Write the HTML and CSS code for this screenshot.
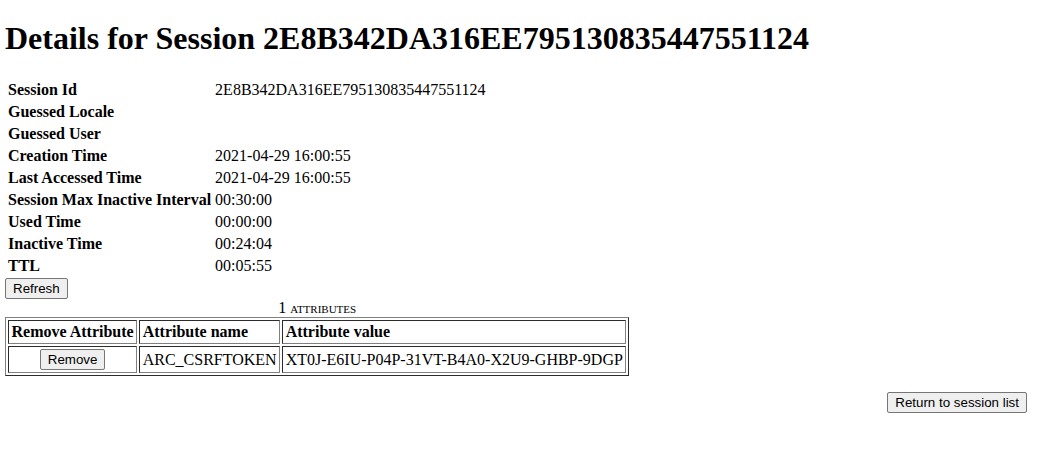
FILE: index.html
```html
<!DOCTYPE html>
<html>
<head>
<meta charset="utf-8">
<title>Sessions Administration: details for 2E8B342DA316EE795130835447551124</title>
<link rel="stylesheet" href="styles.css">
</head>
<body class="page">
<h1 class="title">Details for Session 2E8B342DA316EE795130835447551124</h1>
<table class="details">
  <tr><th>Session Id</th><td>2E8B342DA316EE795130835447551124</td></tr>
  <tr><th>Guessed Locale</th><td></td></tr>
  <tr><th>Guessed User</th><td></td></tr>
  <tr><th>Creation Time</th><td>2021-04-29 16:00:55</td></tr>
  <tr><th>Last Accessed Time</th><td>2021-04-29 16:00:55</td></tr>
  <tr><th>Session Max Inactive Interval</th><td>00:30:00</td></tr>
  <tr><th>Used Time</th><td>00:00:00</td></tr>
  <tr><th>Inactive Time</th><td>00:24:04</td></tr>
  <tr><th>TTL</th><td>00:05:55</td></tr>
</table>
<form class="refresh-form" method="post" action="#">
  <div><button type="submit" class="btn">Refresh</button></div>
</form>
<table class="attrs">
  <caption class="attrs-caption">1 attributes</caption>
  <thead>
    <tr><th>Remove Attribute</th><th>Attribute name</th><th>Attribute value</th></tr>
  </thead>
  <tbody>
    <tr>
      <td class="center"><form class="inline-form" method="post" action="#"><div><button type="submit" class="btn">Remove</button></div></form></td>
      <td>ARC_CSRFTOKEN</td>
      <td>XT0J-E6IU-P04P-31VT-B4A0-X2U9-GHBP-9DGP</td>
    </tr>
  </tbody>
</table>
<form class="return-form" method="post" action="#">
  <p class="return-row"><button type="submit" class="btn">Return to session list</button></p>
</form>
</body>
</html>
```
FILE: styles.css
```css
html, body {
  background: #fff;
}
.page {
  margin: 8px 5px;
  font-family: "Liberation Serif", "Times New Roman", serif;
  font-size: 16px;
  color: #000;
}
.title {
  font-size: 32px;
  font-weight: bold;
  margin: 12px 0 21px 0;
}
.details {
  text-align: left;
  border-collapse: separate;
  border-spacing: 2px;
}
.details th, .details td {
  padding: 1px;
  vertical-align: middle;
}
.details th {
  font-weight: bold;
}
.refresh-form {
  margin: 0;
}
.btn {
  font-family: "Liberation Sans", Arial, sans-serif;
  font-size: 13.333px;
  color: #000;
  background: #efefef;
  border: 1px solid #767676;
  border-radius: 2px;
  padding: 2px 7px;
  margin: 0;
  line-height: normal;
}
.attrs {
  text-align: left;
  border: 1px outset grey;
  border-collapse: separate;
  border-spacing: 2px;
}
.attrs th, .attrs td {
  border: 1px inset grey;
  padding: 2px 2.5px;
}
.attrs-caption {
  font-variant: small-caps;
  text-align: center;
}
.center {
  text-align: center;
}
.inline-form {
  margin: 0;
}
.return-form {
  margin: 0;
}
.return-row {
  text-align: right;
  margin: 16px 0;
  padding-right: 27px;
}
```
